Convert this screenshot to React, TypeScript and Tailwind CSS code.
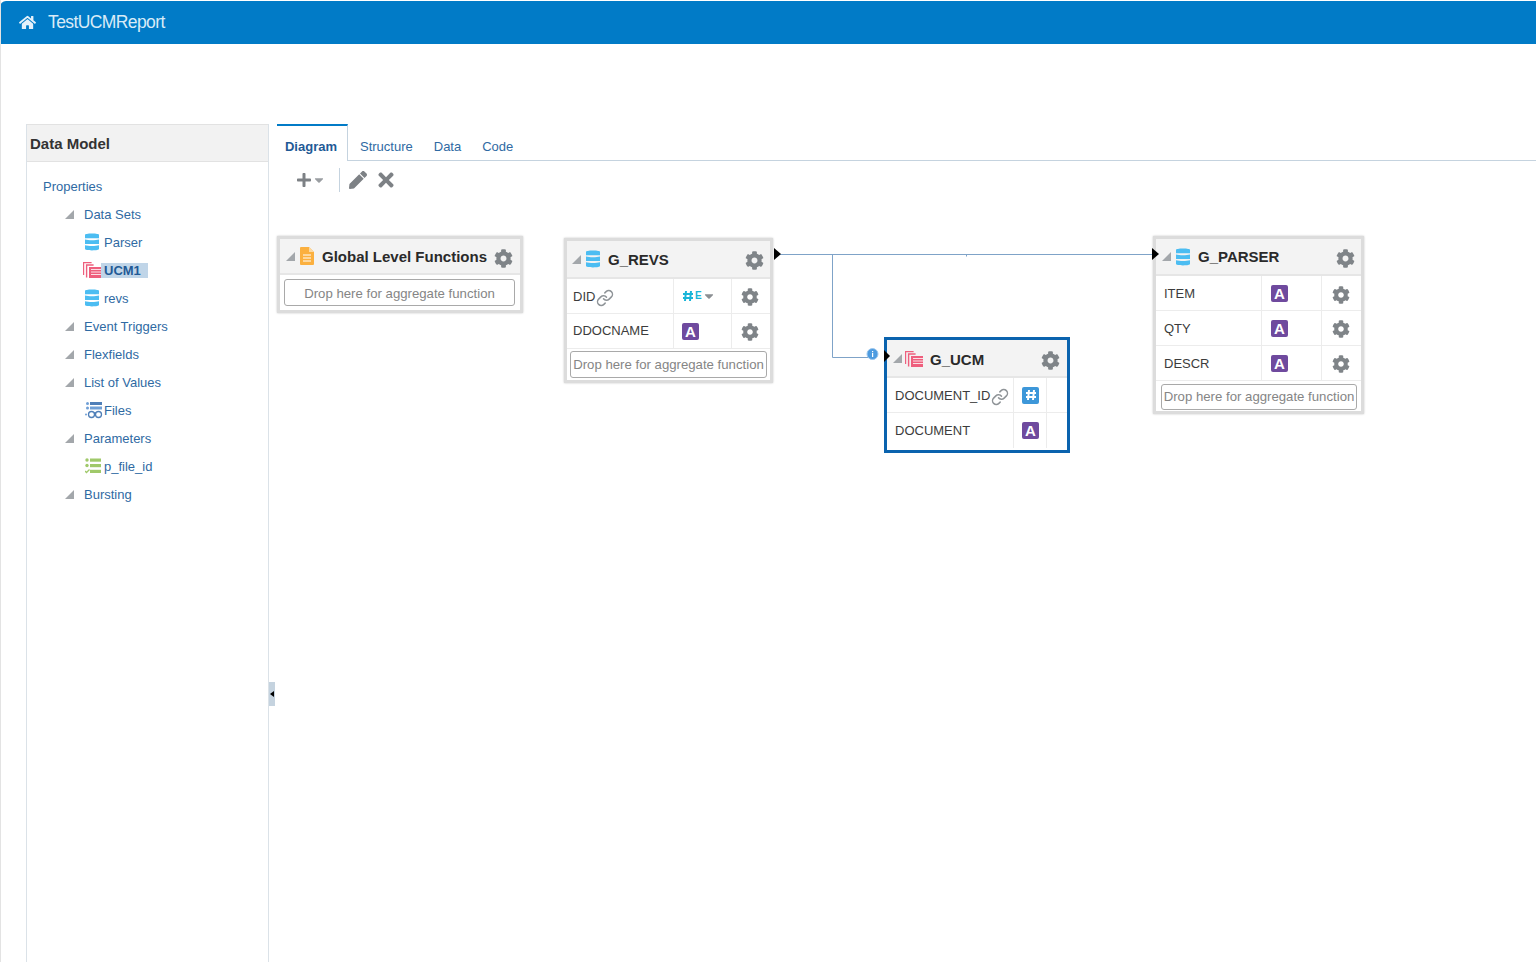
import React from "react";
import { FaCog, FaHome, FaPlus, FaPen, FaTimes, FaCaretDown } from "react-icons/fa";
import { Link } from "lucide-react";

const DbIcon = ({ className = "" }: { className?: string }) => (
  <svg viewBox="0 0 15 18" className={className}>
    <path d="M0 1.500C0 .6 3 0 7.500 0S15 .6 15 1.500V5H0Z" fill="#4cbdf2" />
    <path d="M0 6.200C2 6.800 4.500 7 7.500 7s5.500-.2 7.500-.8V11.200H0Z" fill="#4cbdf2" />
    <path d="M0 12.400C2 13 4.500 13.200 7.500 13.200S13 13 15 12.400V16.500c0 .9-3 1.500-7.500 1.500S0 17.400 0 16.500Z" fill="#4cbdf2" />
  </svg>
);

const DocsIcon = ({ className = "" }: { className?: string }) => (
  <svg viewBox="0 0 18 16" className={className}>
    <path d="M.6 13V.6h8" fill="none" stroke="#ee5f7d" strokeWidth="1.200" />
    <path d="M3.600 15.500V3h7" fill="none" stroke="#ee5f7d" strokeWidth="1.400" />
    <rect x="6" y="5" width="12" height="11" fill="#ee5f7d" />
    <path d="M8 7.500h10M8 10h10M8 12.500h10" stroke="#fff" strokeWidth="0.800" />
  </svg>
);

const NoteIcon = ({ className = "" }: { className?: string }) => (
  <svg viewBox="0 0 14 18" className={className}>
    <path d="M0 1a1 1 0 0 1 1-1h8l5 5v12a1 1 0 0 1-1 1H1a1 1 0 0 1-1-1Z" fill="#fbb03f" />
    <path d="M9 0v5h5Z" fill="#fdd9a0" />
    <path d="M3 8h8M3 11h8M3 14h8" stroke="#fff" strokeWidth="1" />
  </svg>
);

const FilesIcon = ({ className = "" }: { className?: string }) => (
  <svg viewBox="0 0 18 18" className={className}>
    <circle cx="2.500" cy="2.500" r="1.500" fill="#6f9fd6" />
    <rect x="5" y="1" width="12" height="3" fill="#4f7fb8" />
    <circle cx="2.500" cy="7" r="1.500" fill="#6f9fd6" />
    <rect x="5" y="5.500" width="12" height="3" fill="#6f9fd6" />
    <circle cx="1" cy="13.500" r="1" fill="#6f9fd6" />
    <circle cx="6.500" cy="13.500" r="3" fill="#fff" stroke="#4f7fb8" strokeWidth="1.300" />
    <circle cx="13.500" cy="13.500" r="3" fill="#fff" stroke="#4f7fb8" strokeWidth="1.300" />
    <path d="M9 12h2" stroke="#4f7fb8" strokeWidth="1.300" />
  </svg>
);

const ListIcon = ({ className = "" }: { className?: string }) => (
  <svg viewBox="0 0 16 16" className={className}>
    <circle cx="2" cy="2" r="1.700" fill="#a0c96a" />
    <rect x="5" y=".5" width="11" height="3.200" fill="#a0c96a" />
    <circle cx="2" cy="7.500" r="1.700" fill="#a0c96a" />
    <rect x="5" y="6" width="11" height="3.200" fill="#a0c96a" />
    <path d="M0 13l1.500 1.500 3-3" fill="none" stroke="#a0c96a" strokeWidth="1.300" />
    <rect x="5" y="11.800" width="11" height="3.200" fill="#a0c96a" />
  </svg>
);

const Expander = () => (
  <svg viewBox="0 0 9 9" className="h-[9px] w-[9px] shrink-0">
    <path d="M9 0V9H0Z" fill="#a3a7ab" />
  </svg>
);

const HashGlyph = ({ className, color }: { className: string; color: string }) => (
  <svg viewBox="0 0 12 12" className={className}>
    <path d="M4 1 3 11M9 1 8 11M1 4h10M1 8h10" fill="none" stroke={color} strokeWidth="2" />
  </svg>
);

const TreeRow = ({ indent, children }: { indent: string; children: React.ReactNode }) => (
  <div className={`flex h-[28px] items-center text-[13px] leading-none text-[#2f6aa3] ${indent}`}>{children}</div>
);

const Group = ({ label }: { label: string }) => (
  <TreeRow indent="pl-[38px]">
    <Expander />
    <span className="ml-[10px]">{label}</span>
  </TreeRow>
);

const Leaf = ({ icon, label }: { icon: React.ReactNode; label: string }) => (
  <TreeRow indent="pl-[58px]">
    <span className="flex w-[19px] shrink-0 items-center">{icon}</span>
    {label}
  </TreeRow>
);

const ABadge = () => (
  <span className="flex h-[17px] w-[17px] items-center justify-center rounded-[2px] bg-[#6f4a9e] text-[15px] leading-none font-bold text-white">A</span>
);

const HashBadge = () => (
  <span className="flex h-[17px] w-[17px] items-center justify-center rounded-[2px] bg-[#3d97d9]">
    <HashGlyph className="h-[12px] w-[12px]" color="#ffffff" />
  </span>
);

const Gear = ({ className = "" }: { className?: string }) => <FaCog className={`text-[#7f8488] ${className}`} />;

const DropBox = ({ className, text }: { className: string; text: string }) => (
  <div className={`flex items-center justify-center whitespace-nowrap rounded-[3px] border border-[#a9a9a9] bg-white text-[13.200px] leading-none text-[#858585] ${className}`}>{text}</div>
);

const Row = ({ name, type, gear, link, nameW, typeW, gearW, nameClass = "", typeClass = "pl-[9px]", gearClass = "" }: { name: string; type: React.ReactNode; gear: boolean; link?: boolean; nameW: string; typeW: string; gearW: string; nameClass?: string; typeClass?: string; gearClass?: string }) => (
  <div className="flex h-[35px] border-b border-[#ececec] last:border-b-0">
    <div className={`flex items-center border-r border-[#ececec] text-[13px] leading-none text-[#3c3c3c] ${nameW} ${nameClass}`}>
      {name}
      {link && <Link className="ml-[1px] mt-[3px] h-[18px] w-[18px] text-[#8f9498]" strokeWidth={2} />}
    </div>
    <div className={`flex items-center border-r border-[#ececec] ${typeClass} ${typeW}`}>{type}</div>
    <div className={`flex items-center justify-center ${gearW}`}>{gear && <Gear className={`h-[18px] w-[18px] ${gearClass}`} />}</div>
  </div>
);

const NodeHead = ({ icon, title, h, gearClass = "", pad = "pl-[6px]", titleClass = "" }: { icon: React.ReactNode; title: string; h: string; gearClass?: string; pad?: string; titleClass?: string }) => (
  <div className={`flex items-center border-b-2 border-[#e6e6e6] bg-[#f3f3f3] ${pad} ${h}`}>
    <Expander />
    {icon}
    <span className={`text-[15px] leading-none font-bold whitespace-nowrap text-[#2a2a2a] ${titleClass}`}>{title}</span>
    <Gear className={`ml-auto h-[19px] w-[19px] ${gearClass}`} />
  </div>
);

const shadowNode = "absolute border-[3px] border-[#dcdcdc] bg-white shadow-[0_0_2px_#c8c8c8]";

export default function App() {
  return (
    <div className="flex h-[962px] w-[1536px] flex-col overflow-hidden border-l border-[#e3e3e3] bg-white font-['Liberation_Sans',Arial,sans-serif]">
      <header className="mt-px -ml-px flex h-[43px] shrink-0 items-center rounded-tl-[6px] bg-[#017bc7] pl-[19px]">
        <FaHome className="h-[17px] w-[17px] text-[#e4f1fa]" />
        <span className="ml-[12px] text-[17.500px] tracking-[-0.600px] text-[#d9ebf7]">TestUCMReport</span>
      </header>

      <main className="flex min-h-0 flex-1 pt-[80px] pl-[25px]">
        <aside className="relative w-[243px] shrink-0 border-x border-[#dbe2e8]">
          <div className="flex h-[38px] items-center border-t border-b border-[#e2e2e2] bg-[#f2f2f2] pt-[2px] pl-[3px] text-[15px] font-bold text-[#333333]">Data Model</div>
          <nav className="pt-[10px]">
            <TreeRow indent="pl-[16px]">Properties</TreeRow>
            <Group label="Data Sets" />
            <Leaf icon={<DbIcon className="h-[18px] w-[14px]" />} label="Parser" />
            <TreeRow indent="pl-[56px]">
              <DocsIcon className="h-[16px] w-[18px] shrink-0" />
              <span className="flex h-[15px] w-[47px] items-center bg-[#c0d5e8] pl-[3px] font-bold text-[#1f5a96]">UCM1</span>
            </TreeRow>
            <Leaf icon={<DbIcon className="h-[18px] w-[14px]" />} label="revs" />
            <Group label="Event Triggers" />
            <Group label="Flexfields" />
            <Group label="List of Values" />
            <Leaf icon={<FilesIcon className="h-[18px] w-[18px]" />} label="Files" />
            <Group label="Parameters" />
            <Leaf icon={<ListIcon className="h-[16px] w-[16px]" />} label="p_file_id" />
            <Group label="Bursting" />
          </nav>
          <div className="absolute top-[558px] -right-[7px] flex h-[24px] w-[6px] items-center justify-center bg-[#c5d3df]">
            <svg viewBox="0 0 4 6" className="h-[6px] w-[4px]"><path d="M4 0V6L0 3Z" fill="#000" /></svg>
          </div>
        </aside>

        <section className="relative min-w-0 flex-1 pl-[8px]">
          <div className="flex h-[37px] items-end border-b border-[#c5d3df] text-[13px] leading-none text-[#2f6aa3]">
            <div className="-mb-px flex h-[37px] w-[71px] items-center justify-center border-t-[2px] border-r border-t-[#017bc7] border-r-[#c5d3df] bg-white pt-[6px] pr-[2px] font-bold text-[#1f5a96]">Diagram</div>
            <div className="flex h-[36px] items-center pt-[8px]">
              <span className="ml-[12px]">Structure</span>
              <span className="ml-[21px]">Data</span>
              <span className="ml-[21px]">Code</span>
            </div>
          </div>
          <div className="flex h-[38px] items-center pl-[19px] text-[#7d8185]">
            <FaPlus className="h-[16px] w-[16px]" />
            <FaCaretDown className="ml-[1px] h-[14px] w-[12px] text-[#9a9ea2]" />
            <span className="ml-[14px] h-[24px] w-px bg-[#c5d3df]" />
            <FaPen className="ml-[9px] h-[18px] w-[18px]" />
            <FaTimes className="ml-[9px] h-[22px] w-[20px]" />
          </div>

          {/* Global Level Functions */}
          <div className={`${shadowNode} top-[112px] left-[8px] h-[77px] w-[246px]`}>
            <NodeHead h="h-[36px]" title="Global Level Functions" gearClass="mr-[7px] mt-[4px]" icon={<NoteIcon className="mr-[8px] ml-[5px] h-[18px] w-[14px] shrink-0" />} />
            <DropBox className="mx-[4px] mt-[4px] h-[27px] w-[231px] pt-[3px]" text="Drop here for aggregate function" />
          </div>

          {/* G_REVS */}
          <div className={`${shadowNode} top-[114px] left-[295px] h-[145px] w-[209px]`}>
            <NodeHead pad="pl-[5px]" h="h-[38px]" title="G_REVS" gearClass="mr-[6px] mt-[2px]" icon={<DbIcon className="mr-[8px] ml-[5px] h-[18px] w-[14px] shrink-0" />} />
            <Row name="DID" link nameW="w-[107px]" nameClass="pl-[6px]" typeW="w-[58px]" typeClass="pl-[8px]" gearW="w-[38px]" gear gearClass="mr-[3px] mt-[1px]" type={
              <span className="flex items-center">
                <HashGlyph className="h-[12px] w-[12px]" color="#19b5d8" />
                <span className="ml-[1px] text-[10px] leading-none font-bold text-[#19b5d8]">E</span>
                <FaCaretDown className="ml-[1px] h-[14px] w-[12px] text-[#8b8f93]" />
              </span>
            } />
            <Row name="DDOCNAME" nameW="w-[107px]" nameClass="pl-[6px] pb-[2px]" typeW="w-[58px]" typeClass="pl-[8px]" gearW="w-[38px]" gear gearClass="mr-[3px] mt-[1px]" type={<ABadge />} />
            <DropBox className="mx-[3px] mt-[2px] h-[27px] w-[197px]" text="Drop here for aggregate function" />
          </div>

          {/* G_UCM */}
          <div className="absolute top-[213px] left-[615px] h-[116px] w-[186px] border-[3.500px] border-[#0a63ae] bg-white">
            <NodeHead h="h-[38px]" title="G_UCM" titleClass="mt-[2px]" gearClass="mr-[7px] mt-[5px]" icon={<DocsIcon className="mr-[7px] ml-[3px] mt-[2px] h-[16px] w-[18px] shrink-0" />} />
            <Row name="DOCUMENT_ID" link nameW="w-[127px]" nameClass="pl-[8px]" typeW="w-[33px]" typeClass="pl-[8px]" gearW="w-[19px]" gear={false} type={<HashBadge />} />
            <Row name="DOCUMENT" nameW="w-[127px]" nameClass="pl-[8px]" typeW="w-[33px]" typeClass="pl-[8px]" gearW="w-[19px]" gear={false} type={<ABadge />} />
          </div>

          {/* G_PARSER */}
          <div className={`${shadowNode} top-[112px] left-[884px] h-[178px] w-[211px]`}>
            <NodeHead pad="pl-[6px]" h="h-[37px]" title="G_PARSER" gearClass="mr-[6px] mt-[4px]" icon={<DbIcon className="mr-[8px] ml-[5px] h-[18px] w-[14px] shrink-0" />} />
            <Row name="ITEM" nameW="w-[106px]" nameClass="pl-[8px]" typeW="w-[60px]" gearW="w-[39px]" gear gearClass="mr-[2px] mt-[3px]" type={<ABadge />} />
            <Row name="QTY" nameW="w-[106px]" nameClass="pl-[8px]" typeW="w-[60px]" gearW="w-[39px]" gear gearClass="mr-[2px] mt-[2px]" type={<ABadge />} />
            <Row name="DESCR" nameW="w-[106px]" nameClass="pl-[8px]" typeW="w-[60px]" gearW="w-[39px]" gear gearClass="mr-[2px] mt-[2px]" type={<ABadge />} />
            <DropBox className="mx-[5px] mt-[3px] h-[26px] w-[196px]" text="Drop here for aggregate function" />
          </div>

          <svg className="pointer-events-none absolute top-0 left-0 h-[838px] w-[1267px]" viewBox="0 0 1267 838">
            <g fill="none" stroke="#7fa3c8" strokeWidth="1">
              <path d="M510 130.500H885" />
              <path d="M563.500 130.500V233.500H600" />
              <path d="M697.500 130.500v2" />
            </g>
            <path d="M505 124l7 6-7 6Z" fill="#000" />
            <path d="M883 124l7 6-7 6Z" fill="#000" />
            <path d="M615 226l6 6-6 6Z" fill="#000" />
            <circle cx="603.500" cy="230" r="5.500" fill="#4d9be0" stroke="#9cc7ee" />
            <rect x="603" y="229" width="1.200" height="4" fill="#fff" />
            <rect x="603" y="227" width="1.200" height="1.200" fill="#fff" />
          </svg>
        </section>
      </main>
    </div>
  );
}
